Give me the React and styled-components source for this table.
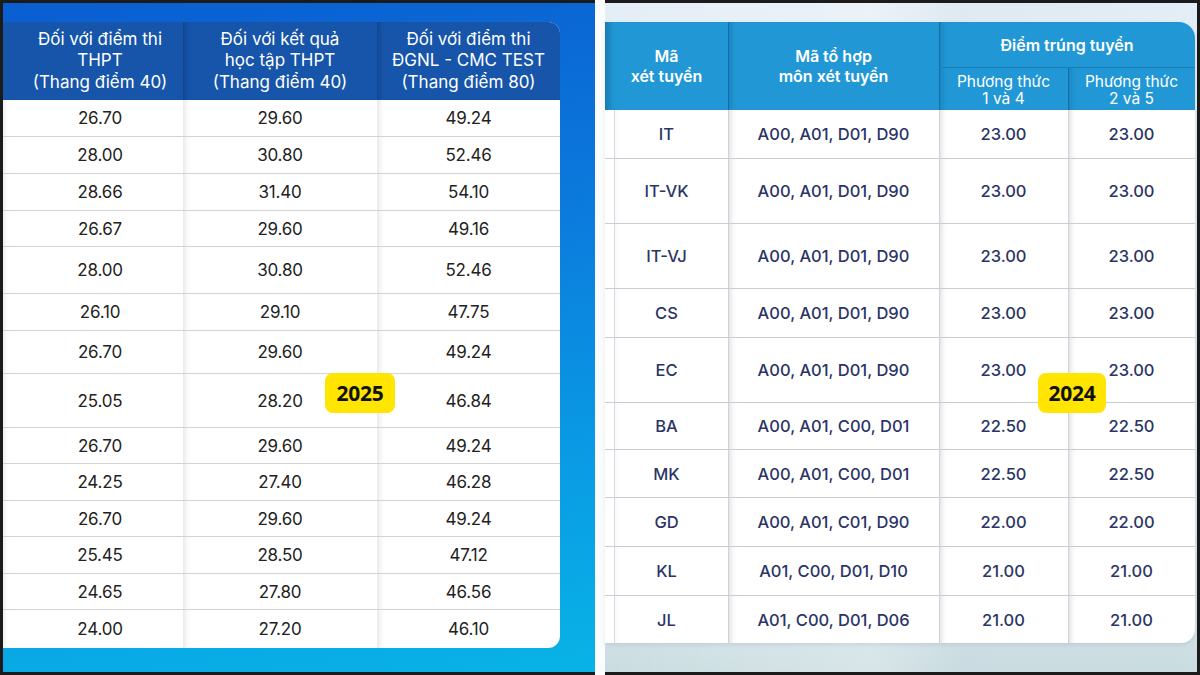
import React from "react";
import styled, { createGlobalStyle } from "styled-components";

const Global = createGlobalStyle`
  html, body { margin: 0; padding: 0; background: #1b1b1b; }
  body { width: 1200px; height: 675px; overflow: hidden; font-family: Inter, "Noto Sans", sans-serif; }
  * { box-sizing: border-box; }
`;

const Page = styled.div`
  display: flex;
  width: 1200px;
  height: 675px;
  padding: 3px;
`;

const Gutter = styled.div`
  width: 10px;
  background: #fbfcfd;
  margin: -3px 0;
`;

const LeftPanel = styled.div`
  position: relative;
  width: 592px;
  padding: 19px 35px 24px 0;
  background: linear-gradient(172deg, #0a5ed0 0%, #0b78dc 35%, #0a9ae4 70%, #08b3e6 100%);
`;

const RightPanel = styled.div`
  position: relative;
  width: 592px;
  padding: 19px 2px 29px 0;
  background:
    linear-gradient(90deg, rgba(255,255,255,0) 0%, rgba(255,255,255,0.25) 45%, rgba(200,215,225,0.2) 60%, rgba(255,255,255,0) 100%),
    linear-gradient(180deg, #e4eef6 0%, #dbe8f1 50%, #d3e3ea 92%, #c9dcdf 100%);
`;

const LeftTable = styled.div`
  width: 557px;
  border-radius: 0 12px 12px 0;
  overflow: hidden;
  background: #fff;
`;

const leftCols = "180px 194px 183px";

const LeftHead = styled.div`
  display: grid;
  grid-template-columns: ${leftCols};
  height: 78px;
  background: #1655a9;
  color: #fff;
`;

const LeftHeadCell = styled.div`
  display: flex;
  align-items: center;
  justify-content: center;
  text-align: center;
  font-size: 17px;
  line-height: 21.5px;
  font-weight: 400;
  padding-left: ${(p) => (p.$first ? "14px" : "0")};
  box-shadow: ${(p) => (p.$first ? "none" : "inset 6px 0 6px -5px rgba(0,20,60,0.35)")};
`;

const LeftRow = styled.div`
  display: grid;
  grid-template-columns: ${leftCols};
  height: ${(p) => p.$h}px;
  border-top: ${(p) => (p.$first ? "none" : "1px solid #d3d3d3")};
`;

const LeftCell = styled.div`
  display: flex;
  align-items: center;
  justify-content: center;
  font-size: 17px;
  color: #222;
  letter-spacing: -0.2px;
  padding-left: ${(p) => (p.$first ? "14px" : "0")};
  box-shadow: ${(p) => (p.$first ? "inset 6px 0 6px -6px rgba(0,0,0,0.12)" : "inset 7px 0 7px -6px rgba(0,0,0,0.14)")};
`;

const RightTable = styled.div`
  width: 590px;
  border-radius: 0 16px 14px 0;
  overflow: hidden;
  background: #fff;
  box-shadow: 0 2px 4px rgba(0,0,0,0.08);
`;

const rightCols = "123px 211px 129px 127px";

const RightHead = styled.div`
  display: grid;
  grid-template-columns: ${rightCols};
  grid-template-rows: 45px 43px;
  background: #2198d5;
  color: #fff;
`;

const RightHeadCell = styled.div`
  grid-column: ${(p) => p.$col};
  grid-row: ${(p) => p.$row};
  display: flex;
  align-items: center;
  justify-content: center;
  text-align: center;
  font-size: ${(p) => (p.$sub ? "15.5px" : "16px")};
  line-height: ${(p) => (p.$sub ? "17px" : "20px")};
  font-weight: ${(p) => (p.$sub ? 400 : 600)};
  padding-top: ${(p) => (p.$sub ? "2px" : "0")};
  border-top: ${(p) => (p.$sub ? "1px solid rgba(10,80,140,0.35)" : "none")};
  box-shadow: ${(p) =>
    p.$first
      ? "inset 10px 0 6px -6px rgba(10,60,110,0.35)"
      : "inset 1px 0 0 rgba(10,70,130,0.35), inset 7px 0 6px -5px rgba(10,60,110,0.3)"};
`;

const RightRow = styled.div`
  display: grid;
  grid-template-columns: ${rightCols};
  height: ${(p) => p.$h}px;
  border-top: ${(p) => (p.$first ? "none" : "1px solid #c9cdd6")};
`;

const RightCell = styled.div`
  display: flex;
  align-items: center;
  justify-content: center;
  font-size: 16.5px;
  font-weight: 500;
  color: #2b3466;
  box-shadow: ${(p) =>
    p.$first
      ? "inset 9px 0 0 #fff, inset 10px 0 0 #d8dbe0, inset 14px 0 6px -4px rgba(0,0,0,0.06)"
      : "inset 1px 0 0 #cfd3d9, inset 7px 0 6px -5px rgba(0,0,0,0.16)"};
`;

const YearBadge = styled.div`
  position: absolute;
  top: 370px;
  left: ${(p) => p.$left}px;
  width: ${(p) => p.$w}px;
  height: 40px;
  border-radius: 8px;
  background: #ffe500;
  display: flex;
  align-items: center;
  justify-content: center;
  font-family: "Open Sans", "Noto Sans", sans-serif;
  font-weight: 700;
  font-size: 21px;
  color: #111;
  letter-spacing: -0.3px;
`;

const leftRows = [
  ["26.70", "29.60", "49.24", 36],
  ["28.00", "30.80", "52.46", 37],
  ["28.66", "31.40", "54.10", 37],
  ["26.67", "29.60", "49.16", 36],
  ["28.00", "30.80", "52.46", 47],
  ["26.10", "29.10", "47.75", 37],
  ["26.70", "29.60", "49.24", 43],
  ["25.05", "28.20", "46.84", 54],
  ["26.70", "29.60", "49.24", 36],
  ["24.25", "27.40", "46.28", 37],
  ["26.70", "29.60", "49.24", 36],
  ["25.45", "28.50", "47.12", 37],
  ["24.65", "27.80", "46.56", 36],
  ["24.00", "27.20", "46.10", 39],
];

const rightRows = [
  ["IT", "A00, A01, D01, D90", "23.00", "23.00", 48],
  ["IT-VK", "A00, A01, D01, D90", "23.00", "23.00", 65],
  ["IT-VJ", "A00, A01, D01, D90", "23.00", "23.00", 65],
  ["CS", "A00, A01, D01, D90", "23.00", "23.00", 49],
  ["EC", "A00, A01, D01, D90", "23.00", "23.00", 65],
  ["BA", "A00, A01, C00, D01", "22.50", "22.50", 47],
  ["MK", "A00, A01, C00, D01", "22.50", "22.50", 48],
  ["GD", "A00, A01, C01, D90", "22.00", "22.00", 49],
  ["KL", "A01, C00, D01, D10", "21.00", "21.00", 49],
  ["JL", "A01, C00, D01, D06", "21.00", "21.00", 48],
];

export default function App() {
  return (
    <>
      <Global />
      <Page>
        <LeftPanel>
          <LeftTable>
            <LeftHead>
              <LeftHeadCell $first>
                Đối với điểm thi<br />THPT<br />(Thang điểm 40)
              </LeftHeadCell>
              <LeftHeadCell>
                Đối với kết quả<br />học tập THPT<br />(Thang điểm 40)
              </LeftHeadCell>
              <LeftHeadCell>
                Đối với điểm thi<br />ĐGNL - CMC TEST<br />(Thang điểm 80)
              </LeftHeadCell>
            </LeftHead>
            {leftRows.map((r, i) => (
              <LeftRow key={i} $h={r[3]} $first={i === 0}>
                <LeftCell $first>{r[0]}</LeftCell>
                <LeftCell>{r[1]}</LeftCell>
                <LeftCell>{r[2]}</LeftCell>
              </LeftRow>
            ))}
          </LeftTable>
          <YearBadge $left={322} $w={70}>2025</YearBadge>
        </LeftPanel>
        <Gutter />
        <RightPanel>
          <RightTable>
            <RightHead>
              <RightHeadCell $col="1" $row="1 / span 2" $first>
                Mã<br />xét tuyển
              </RightHeadCell>
              <RightHeadCell $col="2" $row="1 / span 2">
                Mã tổ hợp<br />môn xét tuyển
              </RightHeadCell>
              <RightHeadCell $col="3 / span 2" $row="1">
                Điểm trúng tuyển
              </RightHeadCell>
              <RightHeadCell $col="3" $row="2" $sub>
                Phương thức<br />1 và 4
              </RightHeadCell>
              <RightHeadCell $col="4" $row="2" $sub>
                Phương thức<br />2 và 5
              </RightHeadCell>
            </RightHead>
            {rightRows.map((r, i) => (
              <RightRow key={i} $h={r[4]} $first={i === 0}>
                <RightCell $first>{r[0]}</RightCell>
                <RightCell>{r[1]}</RightCell>
                <RightCell>{r[2]}</RightCell>
                <RightCell>{r[3]}</RightCell>
              </RightRow>
            ))}
          </RightTable>
          <YearBadge $left={433} $w={68}>2024</YearBadge>
        </RightPanel>
      </Page>
    </>
  );
}
